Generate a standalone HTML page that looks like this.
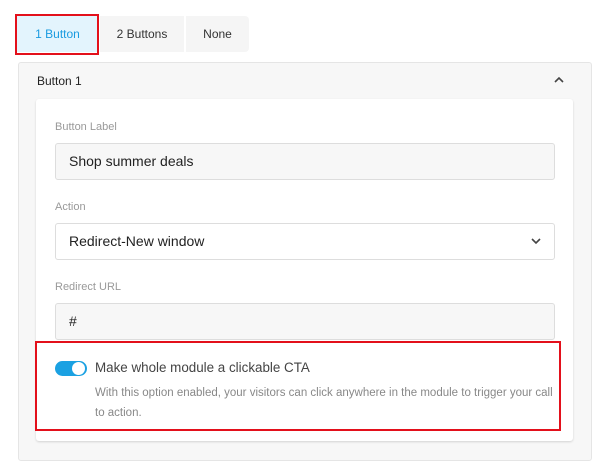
<!DOCTYPE html><html><head><style>
body{margin:0;width:610px;height:470px;background:#fff;font-family:"Liberation Sans",sans-serif;position:relative;overflow:hidden}
.a{position:absolute}
.tab{position:absolute;top:16px;height:36px;background:#f5f5f5;font-size:12px;color:#333;line-height:36px;text-align:center}
.lbl{position:absolute;left:55px;font-size:11px;color:#999;font-weight:500}
.inp{position:absolute;left:55px;width:498px;height:35px;border:1px solid #ddd;border-radius:3px;background:#f7f7f7;font-size:14px;color:#222;line-height:35px;text-indent:13px}
</style></head><body>
<div class="tab" style="left:17px;width:81px;background:#e3f4fd;color:#1a9be0">1 Button</div>
<div class="a" style="left:15px;top:14px;width:80px;height:37px;border:2px solid #e3101b"></div>
<div class="tab" style="left:100px;width:84px">2 Buttons</div>
<div class="tab" style="left:186px;width:63px;border-radius:0 4px 4px 0">None</div>
<div class="a" style="left:18px;top:62px;width:572px;height:397px;background:#f7f7f7;border:1px solid #e5e5e5;border-radius:3px"></div>
<div class="a" style="left:37px;top:74px;font-size:12px;color:#222">Button 1</div>
<svg class="a" style="left:553px;top:76px" width="12" height="8"><path d="M2 6L6 2L10 6" stroke="#444" stroke-width="1.6" fill="none"/></svg>
<div class="a" style="left:36px;top:99px;width:537px;height:342px;background:#fff;border-radius:3px;box-shadow:0 1px 2px rgba(0,0,0,.15)"></div>
<div class="lbl" style="top:121px">Button Label</div>
<div class="inp" style="top:143px">Shop summer deals</div>
<div class="lbl" style="top:201px">Action</div>
<div class="inp" style="top:223px;background:#fff">Redirect-New window</div>
<svg class="a" style="left:530px;top:237px" width="12" height="8"><path d="M2 2L6 6L10 2" stroke="#444" stroke-width="1.6" fill="none"/></svg>
<div class="lbl" style="top:281px">Redirect URL</div>
<div class="inp" style="top:303px">#</div>
<div class="a" style="left:35px;top:341px;width:522px;height:86px;border:2px solid #e3101b"></div>
<div class="a" style="left:55px;top:361px;width:32px;height:15px;border-radius:8px;background:#1ba1e2"></div>
<div class="a" style="left:72px;top:362px;width:13px;height:13px;border-radius:50%;background:#fff"></div>
<div class="a" style="left:95px;top:360px;font-size:13.4px;color:#444">Make whole module a clickable CTA</div>
<div class="a" style="left:95px;top:383px;width:462px;font-size:11.5px;color:#888;line-height:20px">With this option enabled, your visitors can click anywhere in the module to trigger your call to action.</div>
</body></html>
